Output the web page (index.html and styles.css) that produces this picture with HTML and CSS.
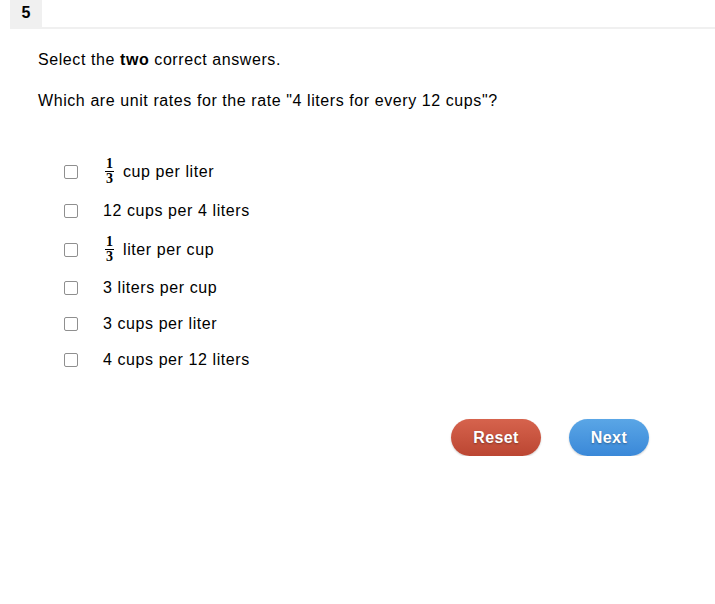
FILE: index.html
```html
<!DOCTYPE html>
<html>
<head>
<meta charset="utf-8">
<link rel="stylesheet" href="styles.css">
</head>
<body>
<div class="header">
  <div class="tab">5</div>
</div>
<div class="content">
  <p class="instr">Select the <b>two</b> correct answers.</p>
  <p class="question">Which are unit rates for the rate "4 liters for every 12 cups"?</p>
  <ul class="options">
    <li class="opt frac-row"><span class="box"></span><span class="label"><span class="frac"><span class="num">1</span><span class="den">3</span></span> cup per liter</span></li>
    <li class="opt"><span class="box"></span><span class="label">12 cups per 4 liters</span></li>
    <li class="opt frac-row"><span class="box"></span><span class="label"><span class="frac"><span class="num">1</span><span class="den">3</span></span> liter per cup</span></li>
    <li class="opt"><span class="box"></span><span class="label">3 liters per cup</span></li>
    <li class="opt"><span class="box"></span><span class="label">3 cups per liter</span></li>
    <li class="opt"><span class="box"></span><span class="label">4 cups per 12 liters</span></li>
  </ul>
  <div class="actions">
    <button class="btn reset">Reset</button>
    <button class="btn next">Next</button>
  </div>
</div>
</body>
</html>
```
FILE: styles.css
```css
html, body {
  margin: 0;
  padding: 0;
  background: #ffffff;
  font-family: "Liberation Sans", Arial, sans-serif;
  color: #000;
}
.header {
  margin-left: 10px;
  height: 27px;
  border-bottom: 2px solid #f0f0f0;
  display: flex;
}
.tab {
  width: 32px;
  height: 27px;
  background: #f0f0f0;
  font-weight: bold;
  font-size: 16px;
  line-height: 25px;
  text-align: center;
}
.content {
  padding-left: 38px;
  letter-spacing: 0.58px;
}
.instr {
  margin: 22px 0 0 0;
  font-size: 16px;
  line-height: 18px;
}
.question {
  margin: 23px 0 0 0;
  font-size: 16px;
  line-height: 18px;
}
.options {
  list-style: none;
  margin: 41px 0 0 0;
  padding: 0 0 0 26px;
}
.opt {
  display: flex;
  align-items: center;
  height: 36px;
  font-size: 16px;
  line-height: 18px;
}
.opt.frac-row {
  height: 41px;
}
.opt:nth-child(2) {
  height: 37px;
}
.box {
  width: 12px;
  height: 12px;
  border: 1px solid #8f8f8f;
  border-radius: 2px;
  margin-right: 25px;
  flex: none;
}
.label {
  display: flex;
  align-items: center;
}
.frac {
  display: inline-flex;
  flex-direction: column;
  align-items: center;
  font-family: "Liberation Serif", "DejaVu Serif", serif;
  font-weight: bold;
  font-size: 14px;
  line-height: 12px;
  letter-spacing: 0;
  margin: 0 9px 0 2px;
}
.frac .num {
  border-bottom: 1px solid #000;
  padding: 0 1px 1px;
}
.frac .den {
  padding-top: 1px;
}
.actions {
  display: flex;
  gap: 28px;
  margin-top: 41px;
  margin-left: 413px;
  letter-spacing: 0;
}
.btn {
  height: 37px;
  border: none;
  border-radius: 19px;
  color: #fff;
  font-family: "Liberation Sans", Arial, sans-serif;
  font-weight: bold;
  font-size: 16px;
  letter-spacing: 0.4px;
  text-shadow: 0 1px 2px rgba(0,0,0,0.35);
  padding: 0;
}
.reset {
  width: 90px;
  background: linear-gradient(#d6634d, #bb4632);
  box-shadow: 0 1px 2px rgba(0,0,0,0.2);
}
.next {
  width: 80px;
  background: linear-gradient(#5aa6e6, #3a88d8);
  box-shadow: 0 1px 2px rgba(0,0,0,0.2);
}
```
